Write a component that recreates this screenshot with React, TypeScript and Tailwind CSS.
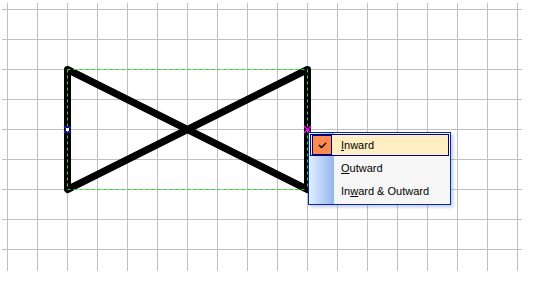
import React from "react";

const vLines = Array.from({ length: 18 }, (_, i) => 7 + 30 * i);
const hLines = Array.from({ length: 9 }, (_, i) => 9 + 30 * i);

function Item({
  children,
  active,
}: {
  children: React.ReactNode;
  active?: boolean;
}) {
  return (
    <div className="flex h-[22px] items-center">
      {active ? (
        <div className="flex h-[22px] flex-1 items-center border border-[#000080] bg-[#ffeec2]">
          <div className="ml-[1px] flex h-[20px] w-[20px] items-center justify-center border border-[#000080] bg-[#ff8a4e]">
            <svg width="9" height="7" viewBox="0 0 9 7">
              <path d="M1 3 L3.5 5.5 L8 1" fill="none" stroke="#000" strokeWidth="1.5" />
            </svg>
          </div>
          <span className="ml-[9px]">{children}</span>
        </div>
      ) : (
        <span className="ml-[31px]">{children}</span>
      )}
    </div>
  );
}

export default function App() {
  return (
    <div className="relative h-[287px] w-[539px] overflow-hidden bg-white">
      <svg width="539" height="287" className="block">
        {vLines.map((x) => (
          <line key={"v" + x} x1={x + 0.5} y1={3} x2={x + 0.5} y2={271} stroke="#c0c0c0" strokeWidth="1" />
        ))}
        {hLines.map((y) => (
          <line key={"h" + y} x1={2} y1={y + 0.5} x2={522} y2={y + 0.5} stroke="#c0c0c0" strokeWidth="1" />
        ))}
        <g stroke="#000" strokeWidth="7" strokeLinecap="round" strokeLinejoin="round" fill="none">
          <path d="M67.5 69.5 L307.5 189.5 L307.5 69.5 L67.5 189.5 Z" />
        </g>
        <g stroke="#22e022" strokeWidth="1" strokeDasharray="3 3" fill="none">
          <line x1="67.5" y1="69.5" x2="307.5" y2="69.5" />
          <line x1="67.5" y1="189.5" x2="307.5" y2="189.5" />
          <line x1="67.5" y1="69.5" x2="67.5" y2="189.5" />
          <line x1="307.5" y1="69.5" x2="307.5" y2="189.5" />
        </g>
        <g stroke="#2020ff" strokeWidth="1.5">
          <line x1="64" y1="126" x2="71" y2="133" />
          <line x1="71" y1="126" x2="64" y2="133" />
        </g>
        <rect x="66" y="128" width="3" height="3" fill="#ffffff" />
        <g stroke="#ff00ff" strokeWidth="1.5">
          <line x1="304" y1="126" x2="311" y2="133" />
          <line x1="311" y1="126" x2="304" y2="133" />
        </g>
      </svg>

      <div className="absolute left-[308px] top-[132px] w-[143px] border border-[#002d96] bg-[#f6f6f6] text-[11px] text-black shadow-[2px_2px_3px_rgba(80,100,200,0.35)] [font-family:'Liberation_Sans',Arial,sans-serif]">
        <div className="relative pb-[2px] pt-[1px]">
          <div className="absolute bottom-0 left-0 top-0 w-[25px] bg-gradient-to-r from-[#e3efff] to-[#93b5ee]" />
          <div className="relative flex flex-col gap-[1px] px-[1px]">
            <Item active>
              <span className="underline">I</span>nward
            </Item>
            <Item>
              <span className="underline">O</span>utward
            </Item>
            <Item>
              In<span className="underline">w</span>ard &amp; Outward
            </Item>
          </div>
        </div>
      </div>
    </div>
  );
}
